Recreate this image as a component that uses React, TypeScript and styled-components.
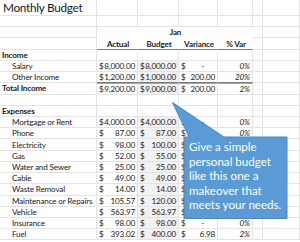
import styled, { createGlobalStyle } from "styled-components";

const GlobalStyle = createGlobalStyle`
  html, body {
    margin: 0;
    padding: 0;
    background: #ffffff;
  }
  body {
    font-family: Lato, "Liberation Sans", sans-serif;
  }
`;

type Row = {
  label: string;
  actual: string;
  budget: string;
  variance: string;
  pct: string;
};

const income: Row[] = [
  { label: "Salary", actual: "8,000.00", budget: "8,000.00", variance: "-", pct: "0%" },
  { label: "Other Income", actual: "1,200.00", budget: "1,000.00", variance: "200.00", pct: "20%" },
];

const expenses: Row[] = [
  { label: "Mortgage or Rent", actual: "4,000.00", budget: "4,000.00", variance: "-", pct: "0%" },
  { label: "Phone", actual: "87.00", budget: "87.00", variance: "-", pct: "0%" },
  { label: "Electricity", actual: "98.00", budget: "100.00", variance: "2.00", pct: "2%" },
  { label: "Gas", actual: "52.00", budget: "55.00", variance: "3.00", pct: "5%" },
  { label: "Water and Sewer", actual: "25.00", budget: "25.00", variance: "-", pct: "0%" },
  { label: "Cable", actual: "49.00", budget: "49.00", variance: "-", pct: "0%" },
  { label: "Waste Removal", actual: "14.00", budget: "14.00", variance: "-", pct: "0%" },
  { label: "Maintenance or Repairs", actual: "105.57", budget: "120.00", variance: "14.43", pct: "12%" },
  { label: "Vehicle", actual: "563.97", budget: "563.97", variance: "-", pct: "0%" },
  { label: "Insurance", actual: "98.00", budget: "98.00", variance: "-", pct: "0%" },
  { label: "Fuel", actual: "393.02", budget: "400.00", variance: "6.98", pct: "2%" },
];

const Page = styled.div`
  position: relative;
  width: 300px;
  height: 242px;
  overflow: hidden;
  background: #ffffff;
`;

const Sheet = styled.div`
  display: grid;
  grid-template-columns: 97px 41px 41px 39px 35px 10px 1fr;
  grid-template-rows: 16px repeat(20, 11.22px);
  color: #1a1a1a;
  font-size: 8.1px;
  letter-spacing: -0.15px;
`;

const Cell = styled.div<{
  $span?: number;
  $align?: "left" | "center" | "right";
  $bold?: boolean;
  $italic?: boolean;
  $indent?: boolean;
  $shade?: boolean;
  $plain?: boolean;
  $underline?: boolean;
  $overline?: boolean;
}>`
  box-sizing: border-box;
  display: flex;
  align-items: center;
  justify-content: ${(p) =>
    p.$align === "center" ? "center" : p.$align === "right" ? "flex-end" : "flex-start"};
  grid-column: ${(p) => (p.$span ? `span ${p.$span}` : "auto")};
  padding: 0 ${(p) => (p.$align === "right" ? "2px" : "0")} 0 ${(p) => (p.$indent ? "12px" : "2px")};
  white-space: nowrap;
  overflow: hidden;
  font-weight: ${(p) => (p.$bold ? 700 : 400)};
  font-style: ${(p) => (p.$italic ? "italic" : "normal")};
  background: ${(p) => (p.$shade ? "#f2f2f2" : "#ffffff")};
  border-right: 1px solid ${(p) => (p.$plain ? "#ffffff" : "#e3e3e3")};
  border-bottom: 1px solid
    ${(p) => (p.$underline ? "#7a7a7a" : p.$plain ? "#ffffff" : "#e3e3e3")};
  border-top: ${(p) => (p.$overline ? "1px solid #a6a6a6" : "0")};
`;

const Title = styled(Cell)`
  font-size: 11.8px;
  font-weight: 400;
  letter-spacing: -0.3px;
  color: #1a1a1a;
  padding-left: 3px;
`;

const Money = styled(Cell)`
  justify-content: space-between;
  padding: 0 2px 0 2px;
`;

const Dash = styled.span`
  padding-right: 11px;
`;

const Callout = styled.div`
  position: absolute;
  left: 171px;
  top: 101px;
  width: 118px;
  height: 119px;
`;

const CalloutShape = styled.svg`
  position: absolute;
  inset: 0;
  overflow: visible;
`;

const CalloutText = styled.div`
  position: absolute;
  left: 13px;
  top: 38px;
  width: 102px;
  padding: 1px 0 0 5px;
  box-sizing: border-box;
  color: #ffffff;
  font-family: Lato, "Liberation Sans", sans-serif;
  font-size: 11.6px;
  line-height: 14.6px;
`;

function Amount({ value, shade, overline }: { value: string; shade?: boolean; overline?: boolean }) {
  return (
    <Money $shade={shade} $overline={overline}>
      <span>$</span>
      {value === "-" ? <Dash>-</Dash> : <span>{value}</span>}
    </Money>
  );
}

function DataRow({ row, underline }: { row: Row; underline?: boolean }) {
  return (
    <>
      <Cell $indent>{row.label}</Cell>
      <Money $underline={underline}>
        <span>$</span>
        <span>{row.actual}</span>
      </Money>
      <Money $shade $underline={underline}>
        <span>$</span>
        <span>{row.budget}</span>
      </Money>
      <Money $underline={underline}>
        <span>$</span>
        {row.variance === "-" ? <Dash>-</Dash> : <span>{row.variance}</span>}
      </Money>
      <Cell $align="right" $italic $underline={underline}>
        {row.pct}
      </Cell>
      <Cell />
      <Cell />
    </>
  );
}

function BlankRow() {
  return (
    <>
      {Array.from({ length: 7 }).map((_, i) => (
        <Cell key={i} />
      ))}
    </>
  );
}

export default function App() {
  return (
    <Page>
      <GlobalStyle />
      <Sheet>
        <Title>Monthly Budget</Title>
        <Cell />
        <Cell />
        <Cell />
        <Cell />
        <Cell />
        <Cell />

        <BlankRow />

        <Cell />
        <Cell $span={4} $align="center" $bold $plain>
          Jan
        </Cell>
        <Cell />
        <Cell />

        <Cell />
        <Cell $align="center" $bold $plain $underline>Actual</Cell>
        <Cell $align="center" $bold $plain $underline>Budget</Cell>
        <Cell $align="center" $bold $plain $underline>Variance</Cell>
        <Cell $align="center" $bold $plain $underline>% Var</Cell>
        <Cell />
        <Cell />

        <Cell $bold>Income</Cell>
        <Cell />
        <Cell />
        <Cell />
        <Cell />
        <Cell />
        <Cell />

        {income.map((r, i) => (
          <DataRow key={r.label} row={r} underline={i === income.length - 1} />
        ))}

        <Cell $bold>Total Income</Cell>
        <Amount value="9,200.00" overline />
        <Amount value="9,000.00" shade overline />
        <Amount value="200.00" overline />
        <Cell $align="right" $italic $overline>2%</Cell>
        <Cell />
        <Cell />

        <BlankRow />

        <Cell $bold>Expenses</Cell>
        <Cell />
        <Cell />
        <Cell />
        <Cell />
        <Cell />
        <Cell />

        {expenses.map((r) => (
          <DataRow key={r.label} row={r} />
        ))}
      </Sheet>

      <Callout>
        <CalloutShape width="118" height="119" viewBox="0 0 118 119">
          <path
            d="M1.5 1.5 L18 36 L13 36 L13 117.5 L116 117.5 L116 36 L53 36 Z"
            fill="#5b9bd5"
            stroke="#4a86c0"
            strokeWidth="1"
          />
        </CalloutShape>
        <CalloutText>
          Give a simple personal budget like this one a makeover that meets your needs.
        </CalloutText>
      </Callout>
    </Page>
  );
}
